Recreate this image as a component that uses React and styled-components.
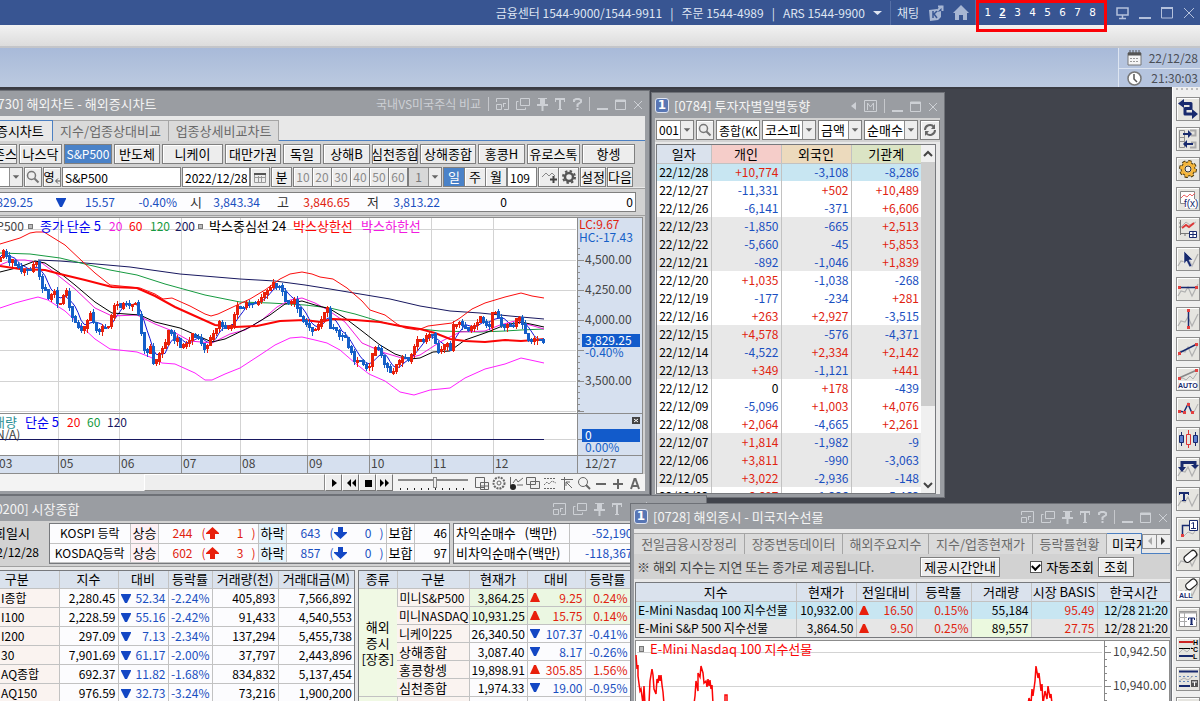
import React, { useState } from "react";
import styled, { createGlobalStyle, css } from "styled-components";

const RED = "#e0230f";
const BLUE = "#1a4fc0";
const NAVY = "#182a6e";

const GlobalStyle = createGlobalStyle`
  *, *::before, *::after { box-sizing: border-box; }
  body { margin: 0; overflow: hidden; }
  body, button, input, select, table {
    font-family: "Noto Sans CJK KR", sans-serif;
    font-size: 13px;
    line-height: 16px;
    color: #000;
  }
  svg { display: block; flex: none; }
  svg text { font-size: 13px; }
  svg text.num { font-size: 12px; }
`;

/* ---------- shell ---------- */

const Page = styled.div`
  display: flex;
  flex-direction: column;
  height: 100vh;
  overflow: hidden;
`;

const TopBar = styled.header`
  display: flex;
  justify-content: flex-end;
  align-items: center;
  height: 25px;
  flex: none;
  background: #385592;
  color: #dfe5f2;
  white-space: nowrap;
`;

const TopPhones = styled.button`
  display: flex;
  align-items: center;
  gap: 8px;
  margin-right: 8px;
  padding: 0;
  border: 0;
  background: none;
  color: inherit;
  font-size: 12px;
`;

const TopGroup = styled.div`
  display: flex;
  align-items: center;
  height: 24px;
  gap: ${p => p.$gap}px;
  padding: 0 ${p => p.$pad}px;
  border-left: 1px solid ${p => (p.$plain ? "transparent" : "#5670a6")};
`;

const GhostButton = styled.button`
  display: flex;
  padding: 0;
  border: 0;
  background: none;
  color: ${p => p.$color || "#cdd0d5"};
  font-size: ${p => p.$size || 13}px;
  white-space: nowrap;
`;

const Screens = styled.nav`
  position: relative;
  display: flex;
  align-items: center;
  height: 25px;
  width: 135px;
  padding-left: 4px;
  border-left: 1px solid #5670a6;

  &::after {
    content: "";
    position: absolute;
    top: 0;
    left: 0;
    width: 131px;
    height: 32px;
    border: 3px solid #fb0207;
    pointer-events: none;
    z-index: 5;
  }
`;

const ScreenLink = styled.a`
  width: 15px;
  text-align: center;
  font-family: "DejaVu Sans Mono", monospace;
  font-size: 11px;
  line-height: 14px;
  color: #fff;
  font-weight: ${p => (p.$active ? "bold" : "normal")};
  text-decoration: ${p => (p.$active ? "underline" : "none")};
`;

const MenuStrip = styled.div`
  flex: none;
  height: 23px;
  background: linear-gradient(#f2f2f2, #dcdcdc);
  border-bottom: 2px solid #c3c5c9;
`;

const InfoStrip = styled.div`
  display: flex;
  justify-content: flex-end;
  flex: none;
  height: 39px;
  background: linear-gradient(#a8bad9, #bccae0);
`;

const Clock = styled.dl`
  width: 82px;
  margin: 0;
  border-left: 1px solid #dde5f1;
  background: #b5c4de;
  color: #4b4f57;

  div {
    display: flex;
    align-items: center;
    height: 20px;
    padding: 0 2px 0 8px;
  }
  div + div { border-top: 1px solid #dde5f1; height: 19px; }
  dd { margin: 0 0 0 auto; font-size: 12px; }
`;

const Work = styled.div`
  display: flex;
  flex: 1;
  min-height: 0;
`;

const Desktop = styled.main`
  position: relative;
  flex: 1;
  overflow: hidden;
  background: #41444c;
  border-top: 2px solid #3a3c42;
`;

const ToolStrip = styled.aside`
  flex: none;
  width: 28px;
  padding: 10px 0 0 3px;
  overflow: hidden;
  background: #f0f0f0;
  border-left: 1px solid #fff;
  background-image: linear-gradient(90deg, #bdbdbd 2px, transparent 2px);
  background-size: 5px 2px;
  background-position: 3px 1px;
  background-repeat: repeat-x;
`;

const ToolButton = styled.button`
  display: flex;
  width: 24px;
  height: 24px;
  margin-bottom: 6px;
  padding: 0;
  border: 1px solid #8f8f8f;
  background: #e6e5e0;
  box-shadow: inset 1px 1px 0 #fff;

  text {
    font-family: "Liberation Sans", sans-serif;
    font-weight: bold;
    font-size: 7px;
  }
  text.fx { font-size: 10px; font-weight: normal; }
`;

/* ---------- windows ---------- */

const WindowFrame = styled.section`
  position: absolute;
  left: ${p => p.$x}px;
  top: ${p => p.$y}px;
  width: ${p => p.$w}px;
  display: flex;
  flex-direction: column;
  padding: 0 ${p => p.$right || 4}px 3px 3px;
  border: 1px solid #6e7177;
  background: #9a9da2;
  z-index: ${p => p.$z || 1};
`;

const TitleBar = styled.div`
  display: flex;
  align-items: center;
  flex: none;
  height: 25px;
  gap: 5px;
  color: #f4f4f4;
  white-space: nowrap;

  h2 { margin: 0; font-size: 13px; font-weight: normal; flex: 1; }
`;

const Badge = styled.span`
  width: 14px;
  height: 15px;
  border: 1px solid #dfe4f0;
  border-radius: 3px;
  background: #5876b4;
  color: #fff;
  font: bold 12px/13px "DejaVu Sans", sans-serif;
  text-align: center;
`;

const TitleIcons = styled.div`
  display: flex;
  align-items: center;
  gap: 7px;
  margin-right: 2px;
  color: #cdd0d5;
`;

const Divider = styled.i`
  width: 1px;
  height: 14px;
  background: #c6c8cc;
`;

const Body = styled.div`
  background: #e8e8e8;
  overflow: hidden;
`;

const Tabs = styled.div`
  display: flex;
  height: 25px;
  padding-top: 4px;
  border-bottom: 1px solid #4c80c2;
`;

const Tab = styled.button`
  height: 21px;
  width: ${p => p.$w}px;
  padding: 0;
  flex: none;
  overflow: hidden;
  white-space: nowrap;
  border: 1px solid #a5a5a5;
  border-left-width: 0;
  border-bottom: 0;
  background: #dadada;
  color: #6a6a6a;
  ${p => p.$active && css`
    padding-left: 5px;
    border-color: #4c80c2;
    background: #e8e8e8;
    color: #000;
    text-align: left;
  `}
`;

const Bar = styled.div`
  display: flex;
  align-items: center;
  gap: ${p => p.$gap || 2}px;
  padding: ${p => p.$pad || "3px 2px 0"};
  background: #d2d2d2;
  white-space: nowrap;
`;

const PushButton = styled.button`
  display: flex;
  align-items: center;
  justify-content: center;
  width: ${p => p.$w}px;
  height: 20px;
  flex: none;
  padding: 0;
  overflow: hidden;
  white-space: nowrap;
  border: 1px solid #7f7f7f;
  background: ${p => (p.$active ? "#4a82c8" : "#ededed")};
  box-shadow: inset 1px 1px 0 ${p => (p.$active ? "#4a82c8" : "#fff")};
  color: ${p => (p.$active ? "#fff" : p.disabled ? "#8a8a8a" : "#000")};
  font-size: ${p => (p.$num ? 12 : 13)}px;
`;

const Joined = styled.div`
  display: flex;
  button + button { margin-left: -1px; }
`;

const Field = styled.input`
  width: ${p => p.$w}px;
  height: 20px;
  flex: none;
  min-width: 0;
  padding: 0 2px;
  border: 1px solid #7f7f7f;
  background: #fff;
  font-size: 12px;
`;

const ComboBox = styled.div`
  position: relative;
  width: ${p => p.$w}px;
  height: 20px;
  flex: none;
  border: 1px solid #7f7f7f;
  background: ${p => p.$bg || "#fff"};

  select {
    width: 100%;
    height: 18px;
    padding: 0 ${p => (p.$end ? 19 : 0)}px 0 2px;
    border: 0;
    background: none;
    appearance: none;
    color: ${p => (p.$end ? "#777" : "inherit")};
    font-size: ${p => (p.$num ? 12 : 13)}px;
    text-align: ${p => (p.$end ? "right" : "left")};
  }
  svg {
    position: absolute;
    top: 0;
    right: 0;
    width: 13px;
    height: 18px;
    border-left: 1px solid #8f8f8f;
    background: #ededed;
    pointer-events: none;
  }
`;

const Combo = ({ label, value, w, bg, num, end }) => (
  <ComboBox $w={w} $bg={bg} $num={num} $end={end}>
    <select aria-label={label} defaultValue={value}>
      <option>{value}</option>
    </select>
    <svg viewBox="0 0 13 18"><path d="M3 7h7l-3.500 4z" fill="#666" /></svg>
  </ComboBox>
);

/* ---------- tables ---------- */

const Grid = styled.table`
  width: 100%;
  table-layout: fixed;
  border-collapse: collapse;

  th {
    height: 18px;
    padding: 0;
    font-weight: normal;
    background: #dae2ed;
  }
  td {
    height: ${p => p.$row || 18}px;
    padding: 0 2px;
    text-align: right;
  }
  th, td {
    overflow: hidden;
    white-space: nowrap;
    line-height: 16px;
    border: 1px solid #c2c2c2;
    border-width: ${p => (p.$lines ? "0 0 1px 1px" : "0 0 0 1px")};
  }
  th { border-bottom-width: 1px; }
  th:first-child, td:first-child { border-left: 0; }
`;

const Cell = styled.td`
  && { text-align: ${p => p.$align || "right"}; }
  color: ${p => p.$color || "#000"};
  background: ${p => p.$bg || "transparent"};
  font-size: ${p => (p.$text ? 13 : 12)}px;
`;

const Boxed = styled.div`
  width: ${p => p.$w}px;
  flex: none;
  overflow: hidden;
  border: 1px solid #77797d;
  background: #fcfcfe;
`;

const Split = styled.span`
  display: flex;
  justify-content: space-between;
  align-items: center;
`;

const signColor = v => (v.startsWith("-") ? BLUE : v.startsWith("+") ? RED : "#000");

const Tri = ({ up }) => (
  <svg width="11" height="11" viewBox="0 0 11 11">
    <path d={up ? "M0 10l4-9h2l4 9z" : "M0 1h10v1l-4 8H4L0 2z"} fill={up ? "#e8200c" : "#1347c4"} />
  </svg>
);

const Arrow = ({ up }) => (
  <svg width="13" height="12" viewBox="0 0 13 12">
    <path d={up ? "M6.500 0L13 6v1H9v5H4V7H0V6z" : "M6.500 12L13 6V5H9V0H4v5H0v1z"} fill={up ? "#e8200c" : "#1347c4"} />
  </svg>
);

/* ---------- icons ---------- */

const Icon = ({ w = 14, h = 14, label, children }) => (
  <svg width={w} height={h} viewBox={`0 0 ${w} ${h}`} fill="none" stroke="currentColor" role={label ? "img" : undefined} aria-label={label}>
    {children}
  </svg>
);

const Search = () => (
  <Icon><circle cx="5.500" cy="5.500" r="4" stroke="#777" strokeWidth="1.500" /><path d="M8.500 8.500l4 4" stroke="#777" strokeWidth="2" /></Icon>
);

const WinButtons = () => (
  <>
    <GhostButton aria-label="최소화"><Icon w={11}><path d="M0 12h11" strokeWidth="2" /></Icon></GhostButton>
    <GhostButton aria-label="최대화"><Icon w={11}><path d="M.5 3v9.500h10V3z" /><path d="M0 4h11" strokeWidth="2" /></Icon></GhostButton>
    <GhostButton aria-label="닫기"><Icon w={10}><path d="M1 4l8 8M9 4l-8 8" /></Icon></GhostButton>
  </>
);

const ViewButtons = () => (
  <>
    <GhostButton aria-label="크기"><Icon w={13}><path d="M.5 5V1.500h12v11H8M.5 7.500h5v5h-5zM7 6.500h3M7.500 6v4" /></Icon></GhostButton>
    <GhostButton aria-label="복사"><Icon w={14}><path d="M4.500 1.500h9v7h-9zM2.500 4.500h-2v8h9v-2" /></Icon></GhostButton>
    <GhostButton aria-label="고정"><Icon w={11}><path d="M1 1h9v1H8v5h3v2H0V7h3V2H1z" fill="currentColor" stroke="none" /><path d="M5.500 9v5" strokeWidth="2" /></Icon></GhostButton>
    <GhostButton aria-label="글꼴"><Icon w={11}><path d="M.5 5V1.500h9V5M3 12.500h4" /><path d="M0 2h10M5 2v10" strokeWidth="2" /></Icon></GhostButton>
    <GhostButton aria-label="도움말"><Icon w={9}><path d="M1 5V3l2-1h3l2 1v2L4.500 7.500V10M4.500 11v2" strokeWidth="2" /></Icon></GhostButton>
  </>
);

const wave = <path d="M1 18l3-5 4 1 3-5 4 9 6-12" stroke="#b0b0b0" strokeWidth="1.200" />;
const dot = (x, y) => <rect x={x - 1} y={y - 1} width="3" height="3" fill="#e34040" stroke="none" />;

const toolIcons = [
  ["전환", <><path d="M4 5.500h10v5H8v5.500h9" stroke={NAVY} strokeWidth="3" strokeLinejoin="round" /><path d="M7 1v9L1 5.500zM15 11v10l6-5z" fill={NAVY} stroke="none" /></>],
  ["이동", <><path d="M2.500 2.500h5v17h-5zM2 9.500h6M2 13.500h6" stroke="#8f8f8f" /><path d="M13 2.500h5.500v5H14M13 19.500h5.500v-5H14" stroke="#aaa" strokeWidth="2" /><path d="M6 6h6M16 16H9" stroke={NAVY} strokeWidth="2" /><path d="M11 2l4 4-4 4zM10 12l-4 4 4 4z" fill={NAVY} stroke="none" /></>],
  ["설정", <><circle cx="11" cy="11" r="7" stroke="#4e3c12" strokeWidth="4" strokeDasharray="3 2.500" /><circle cx="11" cy="11" r="6" stroke="#4e3c12" strokeWidth="3" /><circle cx="11" cy="11" r="7" stroke="#f5b63c" strokeWidth="2" strokeDasharray="3 2.500" /><circle cx="11" cy="11" r="5" stroke="#f5b63c" strokeWidth="3" /><circle cx="11" cy="11" r="3" stroke="#333" fill="#eee" /></>],
  ["수식", <><path d="M3.500 3.500h14v12h-14z" fill="#fff" stroke="#888" /><path d="M4 10l3-3 3 2 3-3 2 2 3-3" stroke="#e66" /><path d="M8 11h13v9H8z" fill="#fff" stroke="none" /><text className="fx" x="7" y="19" fill={NAVY} stroke="none">f(x)</text></>],
  ["지표", <><path d="M3.500 2v15M3 15.500h9M2 5h2M2 9h2M8 15v3" stroke="#777" /><path d="M4 9l5-5 4 3 6-3" stroke="#b0b0b0" /><path d="M5 10l4-3 3 2 5-4" stroke="#dd3838" strokeWidth="2" /><path d="M12.500 13.500h7v6h-7zM16 14v6M12 16.500h8" fill="#fff" stroke={NAVY} /></>],
  ["선택", <>{wave}<path d="M7 3l9 9h-4l3 6-2.500 1-3-6-2.500 3z" fill={NAVY} stroke="#fff" strokeWidth=".5" /></>],
  ["수평선", <>{wave}<path d="M2 9.500h18" stroke={NAVY} strokeWidth="1.500" />{dot(2, 9)}{dot(19, 9)}</>],
  ["수직선", <>{wave}<path d="M11.500 3v16" stroke={NAVY} strokeWidth="1.500" />{dot(11, 2)}{dot(11, 19)}</>],
  ["추세선", <>{wave}<path d="M2 15l18-9" stroke={NAVY} strokeWidth="1.500" />{dot(2, 15)}{dot(19, 6)}</>],
  ["자동추세", <><path d="M2 11l4-1 3 2 4-4 3 3 4-6" stroke="#b0b0b0" /><path d="M2 10l18-8" stroke="#888" strokeWidth="1.500" />{dot(2, 10)}{dot(19, 2)}<path d="M2 13h18v8H2z" fill="#fff" stroke="none" /><text x="1" y="20" fill={NAVY} stroke="none">AUTO</text></>],
  ["패턴", <><path d="M14 15l3-1 4-8" stroke="#b0b0b0" /><path d="M2 13l5 1 4-8 4 9" stroke={NAVY} strokeWidth="1.500" />{dot(2, 13)}{dot(7, 14)}{dot(11, 6)}{dot(15, 14)}</>],
  ["봉", <><path d="M4.500 4v14M18.500 4v14" stroke={NAVY} /><path d="M2.500 7.500h4v7h-4zM16.500 7.500h4v7h-4z" fill="#5d7fd0" stroke={NAVY} /><path d="M11.500 2v4M11.500 17v3M9.500 6.500h4v10h-4z" stroke="#d33" /></>],
  ["되돌리기", <>{wave}<path d="M5 12V4.500h13V8" stroke={NAVY} strokeWidth="3" /><path d="M1 9h8l-4 5zM14 7h8l-4 4z" fill={NAVY} stroke="none" /></>],
  ["문자", <>{wave}<path d="M2.500 7V4.500h9V7M5 12.500h4" stroke={NAVY} /><path d="M2 5h10M7 5v8" stroke={NAVY} strokeWidth="2" /></>],
  ["번호", <><path d="M7 18l4-4 5 2 4-6" stroke="#b0b0b0" /><path d="M5.500 17V7.500H12" stroke={NAVY} strokeWidth="1.500" />{dot(5, 17)}<path d="M12.500 2.500h8v10h-8z" fill="#fff" stroke={NAVY} /><path d="M14.500 5.500l2-1v6M14 10.500h5" stroke={NAVY} /></>],
  ["지우기", <>{wave}<rect x="6" y="5" width="14" height="7" rx="3" transform="rotate(-40 13 8)" fill="#fff" stroke="#222" strokeWidth="1.200" /></>],
  ["전체지우기", <>{wave}<rect x="8" y="3" width="12" height="7" rx="3" transform="rotate(-40 14 6)" fill="#fff" stroke="#222" strokeWidth="1.200" /><path d="M1 13h13v8H1z" fill="#fff" stroke="none" /><text x="2" y="20" fill={NAVY} stroke="none">ALL</text></>],
  ["표", <><path d="M2.500 3.500h17v15h-17z" fill="#fff" stroke="#888" /><path d="M2 4.500h18" stroke="#aaa" strokeWidth="2" /><path d="M2 9.500h18M2 13.500h18M7.500 4v14" stroke="#aaa" /><path d="M10 9h9v8h-9z" fill="#fff" stroke="none" /><path d="M11.500 12v-2h6v2M13 16.500h3" stroke={NAVY} /><path d="M14.500 10v7" stroke={NAVY} strokeWidth="2" /></>],
  ["고저종", <><path d="M2 4h14" stroke="#c22" strokeWidth="2" /><path d="M2 18h14" stroke={NAVY} strokeWidth="2" /><path d="M2 10.500h14" stroke="#000" /><path d="M2 15l4-4 4 3 5-5" stroke="#b0b0b0" /><text x="16" y="7" fill="#000" stroke="none">H</text><text x="16" y="14" fill="#000" stroke="none">C</text><text x="16" y="21" fill="#000" stroke="none">L</text></>],
  ["구간", <><path d="M2 3.500h19M2 18h11" stroke={NAVY} strokeWidth="2" /><path d="M2 8.500h18M2 13.500h11" stroke="#68b" strokeDasharray="2 2" /><path d="M2 13l5-3 4 2 5-4" stroke="#b0b0b0" /><path d="M14 12h7v7h-7z" fill="#555" stroke="none" /><path d="M15 14h5M17.500 14v4" stroke="#fff" /></>],
  ["더보기", <path d="M3 4h16" stroke="#999" />]
];

/* ---------- price chart ---------- */

const closes = [
  [0, 257], [3, 251], [6, 255], [9, 262], [12, 260], [18, 267], [22, 272], [25, 267], [29, 273], [32, 265], [36, 262],
  [38, 270], [41, 287], [44, 286], [47, 298], [50, 299], [53, 285], [56, 303], [59, 304], [62, 300], [65, 285], [68, 303],
  [73, 320], [79, 327], [82, 331], [88, 318], [91, 310], [94, 328], [100, 332], [103, 324], [106, 329], [109, 324],
  [112, 312], [115, 302], [121, 308], [124, 300], [127, 306], [135, 303], [139, 317], [141, 332], [144, 350], [147, 352],
  [150, 346], [153, 363], [156, 360], [160, 351], [165, 343], [168, 330], [171, 333], [174, 340], [177, 338], [180, 347],
  [186, 343], [189, 340], [192, 334], [198, 338], [201, 343], [204, 348], [207, 345], [210, 338], [216, 328], [219, 322],
  [225, 328], [231, 325], [234, 314], [237, 306], [243, 307], [246, 303], [257, 303], [260, 298], [267, 290], [273, 283],
  [277, 287], [280, 286], [283, 293], [286, 303], [292, 302], [295, 297], [298, 313], [304, 321], [307, 325], [313, 331],
  [319, 324], [323, 313], [327, 308], [329, 326], [335, 329], [338, 333], [341, 338], [344, 333], [347, 345], [350, 348],
  [353, 361], [359, 360], [365, 366], [368, 370], [371, 358], [374, 346], [380, 351], [383, 362], [389, 370], [392, 377],
  [395, 359], [397, 369], [400, 357], [406, 358], [409, 361], [412, 350], [418, 338], [424, 341], [427, 334], [433, 334],
  [436, 348], [439, 352], [442, 347], [448, 342], [450, 350], [453, 325], [459, 322], [465, 327], [468, 330], [477, 322],
  [480, 317], [486, 325], [489, 326], [492, 312], [494, 310], [497, 315], [500, 322], [503, 328], [509, 324], [512, 328],
  [518, 315], [521, 320], [524, 331], [527, 338], [530, 342], [536, 338], [539, 340], [544, 342]
];

const at = (pts, x) => {
  const i = Math.max(1, pts.findIndex(p => p[0] >= x));
  const [x0, y0] = pts[i - 1];
  const [x1, y1] = pts[i];
  return y0 + ((y1 - y0) * (x - x0)) / (x1 - x0);
};

const candles = [];
for (let i = 0; i < 182; i++) {
  const x = i * 3;
  const close = at(closes, x);
  const open = i ? at(closes, x - 3) : close + 4;
  const pad = (i * 7) % 3;
  candles.push({
    x,
    close,
    up: close < open,
    top: Math.round(Math.min(open, close) - (pad === 1 ? 1 : 0)),
    bottom: Math.round(Math.max(open, close) + (pad === 2 ? 2 : 1)),
    wick: (i * 5) % 4,
    tail: (i * 11) % 5
  });
}

const ma5 = candles.map((c, i) => {
  const part = candles.slice(Math.max(0, i - 4), i + 1);
  return `${c.x},${part.reduce((s, p) => s + p.close, 0) / part.length}`;
}).join(" ");

const lines = [
  ["#181860", 1, "38,260 60,261 85,263 130,267 180,274 240,279 275,281 305,285 330,289 360,294 390,299 420,306 450,311 480,313 510,316 544,319"],
  ["#169a40", 1, "0,253 30,254 60,258 85,264 110,270 137,275 165,284 205,295 240,302 270,303 305,305 330,308 355,314 385,323 410,328 440,331 480,332 505,331 521,330 544,329"],
  ["#fb0d0d", 1, "0,244 10,241 20,238 30,233 36,232 44,232 52,237 65,245 83,262 95,273 110,285 140,288 155,294 163,299 172,298 190,306 205,314 211,316 218,314 235,306 250,299 265,290 280,279 290,274 302,272 312,274 320,277 333,279 347,288 362,301 370,310 385,315 397,324 405,328 418,330 428,326 452,323 460,318 472,309 485,303 505,297 521,293 532,296 544,298"],
  ["#ff20ff", 1, "0,308 15,303 30,299 38,297 48,300 65,311 80,325 95,339 110,349 137,352 150,357 162,363 175,364 195,373 205,380 212,380 225,374 240,368 260,355 275,345 290,338 302,337 315,340 327,343 340,350 355,363 369,374 385,381 400,392 414,395 430,390 450,388 465,378 485,369 505,364 521,358 535,361 544,363"],
  ["#f21ae0", 1, "0,265 12,260 25,260 42,263 55,273 75,289 95,308 112,316 137,315 155,324 170,330 190,341 212,343 230,334 245,330 262,320 277,307 290,300 302,298 315,303 328,310 345,322 362,343 385,353 405,359 420,355 440,342 460,332 485,331 500,325 515,321 530,325 544,329"],
  ["#000", 1, "0,272 20,267 35,261 45,263 60,273 75,285 95,302 112,313 140,315 155,322 180,328 205,339 212,342 225,339 250,327 270,315 285,304 302,301 315,305 330,309 345,318 362,331 380,345 395,354 410,359 420,358 433,352 450,351 465,340 485,333 505,325 521,322 535,325 544,327"],
  ["#fb0505", 2, "0,266 20,269 45,270 60,274 85,280 112,287 137,288 155,296 175,307 195,316 215,325 235,327 257,326 280,321 305,320 320,322 333,319 355,320 380,322 400,326 420,329 435,333 450,339 465,341 485,342 505,340 521,341 535,340 544,339"]
];

const legend = [
  [-19, "S&P500", "#444"], [40, "종가 단순 5", "#0000f0"], [109, "20", "#f21ae0"], [129, "60", "#fb0505"],
  [150, "120", "#169a40"], [175, "200", "#181860"], [209, "박스중심선 24", "#000"], [293, "박스상한선", "#fb0505"], [361, "박스하한선", "#f21ae0"]
];

const months = [[-3, "03"], [58, "05"], [119, "06"], [181, "07"], [240, "08"], [307, "09"], [369, "10"], [431, "11"], [493, "12"]];

const PriceChart = () => (
  <svg width="674" height="257" viewBox="-31 217 674 257" role="img" aria-label="S&P500 일봉 차트">
    <rect x="-31" y="217" width="674" height="257" fill="#fff" />
    <rect x="578" y="218" width="64" height="256" fill="#d6e0ef" />
    <rect x="-31" y="456" width="673" height="17" fill="#d6e0ef" />
    <g stroke="#d3d3d3" shapeRendering="crispEdges">
      {[229, 260, 290, 320, 350, 381, 411, 439].map(y => <path key={y} d={`M-31 ${y}.500H576`} />)}
      {months.slice(1).map(([x]) => <path key={x} d={`M${x}.500 218V456`} />)}
    </g>
    <g stroke="#8c8c8c" shapeRendering="crispEdges">
      <path d="M-31 217.500H643M-31 413.500H643M-31 455.500H643M-31 473.500H643M577.500 217V474M642.500 217V474" />
      {months.slice(1).map(([x]) => <path key={x} d={`M${x}.500 456V473`} />)}
      {Array.from({ length: 28 }, (_, i) => <path key={i} d={`M578 ${248 + i * 6}.500h2`} />)}
      {[260, 290, 320, 350, 381, 411, 439].map(y => <path key={y} d={`M578 ${y}.500h6`} />)}
    </g>
    {lines.slice(0, 4).map(([c, w, pts]) => <polyline key={c} points={pts} fill="none" stroke={c} strokeWidth={w} />)}
    <polyline points={ma5} fill="none" stroke="#1414d8" />
    {lines.slice(4).map(([c, w, pts]) => <polyline key={c} points={pts} fill="none" stroke={c} strokeWidth={w} />)}
    <g shapeRendering="crispEdges">
      {candles.map(c => (
        <g key={c.x} fill={c.up ? "#e8200c" : "#155fc8"}>
          <rect x={c.x} y={c.top - c.wick} width="1" height={c.bottom - c.top + c.wick + c.tail} />
          <rect x={c.x - 1} y={c.top} width="3" height={Math.max(2, c.bottom - c.top)} />
        </g>
      ))}
    </g>
    <path d="M-31 439.500H544" stroke="#181860" shapeRendering="crispEdges" />
    {legend.map(([x, t, c]) => <text key={t} className={/[가-힣]/.test(t) ? "" : "num"} x={x} y="231" fill={c}>{t}</text>)}
    {[28, 198].map(x => <rect key={x} x={x + 0.5} y="224.500" width="4" height="4" fill="#bbb" stroke="#777" />)}
    <text x="-19" y="427" fill="#2a8f96">거래량</text>
    <text x="25" y="427" fill="#0000f0">단순 5</text>
    <text className="num" x="67" y="427" fill="#fb0505">20</text>
    <text className="num" x="87" y="427" fill="#169a40">60</text>
    <text className="num" x="107" y="427" fill="#181860">120</text>
    <text className="num" x="-8" y="439" fill="#444">(N/A)</text>
    {months.map(([x, m]) => <text className="num" key={m} x={x + 2} y="468" fill="#444">{m}</text>)}
    <text className="num" x="585" y="468" fill="#444">12/27</text>
    <g fill="#444">
      <text className="num" x="585" y="264">4,500.00</text>
      <text className="num" x="585" y="294">4,250.00</text>
      <text className="num" x="585" y="324">4,000.00</text>
      <text className="num" x="585" y="385">3,500.00</text>
    </g>
    <text className="num" x="579" y="229" fill={RED}>LC:9.67</text>
    <text className="num" x="579" y="242" fill="#155fc8">HC:-17.43</text>
    <rect x="582" y="334" width="58" height="13" fill="#125bcb" />
    <text className="num" x="585" y="345" fill="#fff">3,829.25</text>
    <text className="num" x="585" y="357" fill="#155fc8">-0.40%</text>
    <rect x="582" y="429" width="58" height="13" fill="#125bcb" />
    <text className="num" x="585" y="440" fill="#fff">0</text>
    <text className="num" x="585" y="452" fill="#155fc8">0.00%</text>
    <rect x="632" y="417" width="8" height="7" fill="#444" />
    <path d="M634 419l4 3M638 419l-4 3" stroke="#fff" />
  </svg>
);

const Quote = styled.dl`
  display: grid;
  grid-template-columns: 63px 34px 48px 62px 25px 58px 29px 61px 29px 61px 67px 1fr;
  align-items: center;
  height: 20px;
  margin: 0 9px 0 2px;
  padding-right: 2px;
  border: 1px solid #7f7f7f;
  background: #fdfdff;
  color: ${BLUE};

  dt { color: #333; text-align: right; }
  dd { margin: 0; text-align: right; font-size: 12px; }
  svg { margin-left: auto; }
`;

const QuoteValue = styled.dd`
  color: ${p => p.$color};
`;

const QuoteWrap = styled.div`
  padding: 3px 0;
  border-top: 1px solid #a0a0a0;
  border-bottom: 1px solid #a0a0a0;
  margin-top: 1px;
  background: #d2d2d2;
`;

const PlayRow = styled.div`
  display: flex;
  align-items: center;
  height: 17px;
  padding-right: 3px;
  background: #f3f3f3;
`;

const Thumb = styled.div`
  width: 181px;
  height: 17px;
  margin-left: 177px;
  border: 1px solid #8a8a8a;
  border-top-color: #fff;
  border-left-color: #fff;
  background: #eee;
`;

const PlayButton = styled.button`
  width: 17px;
  height: 17px;
  padding: 0;
  display: flex;
  align-items: center;
  justify-content: center;
  border: 1px solid #777;
  border-top-color: #fff;
  border-left-color: #fff;
  background: #eee;
`;

const Zoom = styled.input`
  appearance: none;
  width: 70px;
  height: 14px;
  margin: 0 7px 0 5px;
  background:
    linear-gradient(#8a8a8a, #8a8a8a) 0 3px / 100% 2px no-repeat,
    repeating-linear-gradient(90deg, #222 0 1px, transparent 1px 7px) 2px 12px / 100% 3px no-repeat;

  &::-webkit-slider-thumb {
    appearance: none;
    width: 4px;
    height: 11px;
    border: 1px solid #888;
    background: #eee;
  }
`;

const ChartIcons = styled.div`
  display: flex;
  align-items: center;
  gap: 3px;
  margin-left: auto;
  color: #666;
`;

const chartTools = [
  ["창 추가", <path d="M.5 1.500h9v10h-9zM5.500 6.500h8v7h-8zM9.500 6v8M5 10h9" />],
  ["환경", <><circle cx="7" cy="7" r="5.500" strokeWidth="2" strokeDasharray="2 1" /><circle cx="7" cy="7" r="2" /></>],
  ["지표 추가", <><path d="M1.500 1v9M4 7l3-4 2 3 5-4M8 9h6" /><circle cx="4" cy="11" r="3" fill="#222" stroke="none" /></>],
  ["겹치기", <path d="M.5 1.500h9v7h-9zM4.500 5.500h9v7h-9z" fill="#eee" />],
  ["비교", <path d="M1 2.500h12M1 12.500h12M1 9l3-3 2 2 3-3 4 2" strokeDasharray="2 1" />],
  ["십자선", <path d="M4.500 1v13M1 3.500h12M6 6l6 6M6 6v4M6 6h4" />],
  ["돋보기", <><circle cx="6" cy="6" r="4.500" /><path d="M9 9l4 4" strokeWidth="2" /></>],
  ["축소", <path d="M2 8h10" strokeWidth="2" />],
  ["확대", <path d="M2 8h10M7 3v10" strokeWidth="2" />],
  ["자동", <path d="M3 13L6.500 3h1L11 13M4 10h6" strokeWidth="2" />]
];

const markets = [
  ["다우존스", 48], ["나스닥", 43], ["S&P500", 48], ["반도체", 46], ["니케이", 61], ["대만가권", 56], ["독일", 38],
  ["상해B", 47], ["심천종합", 46], ["상해종합", 56], ["홍콩H", 47], ["유로스톡", 53], ["항셍", 53]
];

const ChartWindow = () => {
  const [market, setMarket] = useState("S&P500");
  return (
    <WindowFrame $x={-37} $y={1} $w={687}>
      <TitleBar>
        <Badge>1</Badge>
        <h2>[0730] 해외차트 - 해외증시차트</h2>
        <TitleIcons>
          <GhostButton $size={12}>국내VS미국주식 비교</GhostButton>
          <Divider />
          <ViewButtons />
          <Divider />
          <WinButtons />
        </TitleIcons>
      </TitleBar>
      <Body>
        <Tabs>
          <Tab $w={86} $active>해외증시차트</Tab>
          <Tab $w={116}>지수/업종상대비교</Tab>
          <Tab $w={110}>업종상세비교차트</Tab>
        </Tabs>
        <Bar>
          {markets.map(([name, w]) => (
            <PushButton key={name} $w={w} $num={name === "S&P500"} $active={name === market} onClick={() => setMarket(name)}>{name}</PushButton>
          ))}
        </Bar>
        <Bar $gap={1}>
          <Combo label="종목코드" value="SPX" w={54} num />
          <PushButton $w={18} aria-label="검색"><Search /></PushButton>
          <PushButton $w={18} $num>
            영<Icon w={6} h={16}><path d="M5.500 6v6H1M3 9.500L.5 12 3 14.500" stroke="#555" /></Icon>
          </PushButton>
          <Field aria-label="종목명" defaultValue="S&P500" $w={119} />
          <Joined>
            <Field aria-label="일자" defaultValue="2022/12/28" $w={68} />
            <PushButton $w={20} aria-label="달력">
              <Icon w={12} h={12}><path d="M.5 2.500h11v9H.5zM1 6.500h10M4.500 5v6M7.500 5v6" stroke="#999" /><path d="M0 3h12" stroke="#555" strokeWidth="2" /></Icon>
            </PushButton>
          </Joined>
          <PushButton $w={21}>분</PushButton>
          <Joined>
            {["10", "20", "30", "40", "50", "60"].map(n => <PushButton key={n} $w={20} $num disabled>{n}</PushButton>)}
            <Combo label="분 단위" value="1" w={34} bg="#d8d8d8" num end />
          </Joined>
          <Joined>
            <PushButton $w={22} $active>일</PushButton>
            <PushButton $w={22}>주</PushButton>
            <PushButton $w={22}>월</PushButton>
            <Field aria-label="개수" defaultValue="109" $w={30} />
          </Joined>
          <Joined>
            <PushButton $w={21} aria-label="지표"><Icon w={16}><path d="M1 7l4-4 3 3 3-3 3 3" stroke="#888" /><path d="M12.500 6v7M9 9.500h7" stroke="#444" strokeWidth="2" /></Icon></PushButton>
            <PushButton $w={21} aria-label="차트 설정"><Icon><circle cx="7" cy="7" r="4" stroke="#555" strokeWidth="2.500" /><circle cx="7" cy="7" r="6" stroke="#555" strokeWidth="2" strokeDasharray="2.400 2.300" /></Icon></PushButton>
          </Joined>
          <PushButton $w={26}>설정</PushButton>
          <PushButton $w={26}>다음</PushButton>
        </Bar>
        <QuoteWrap>
          <Quote>
            <dd>3,829.25</dd>
            <dd><Tri /></dd>
            <dd>15.57</dd>
            <dd>-0.40%</dd>
            <dt>시</dt>
            <dd>3,843.34</dd>
            <dt>고</dt>
            <QuoteValue $color={RED}>3,846.65</QuoteValue>
            <dt>저</dt>
            <dd>3,813.22</dd>
            <QuoteValue $color="#000">0</QuoteValue>
            <QuoteValue $color="#000">0</QuoteValue>
          </Quote>
        </QuoteWrap>
        <Bar $pad="1px 2px 0">
          <PriceChart />
        </Bar>
        <PlayRow>
          <Thumb />
          <PlayButton aria-label="재생"><Icon w={10} h={10}><path d="M3 1v8l5-4z" fill="#000" stroke="none" /></Icon></PlayButton>
          <PlayButton aria-label="뒤로"><Icon w={10} h={10}><path d="M5 1v8L1 5zM10 1v8L6 5z" fill="#000" stroke="none" /></Icon></PlayButton>
          <PlayButton aria-label="정지"><Icon w={10} h={10}><path d="M2 2h7v7H2z" fill="#000" stroke="none" /></Icon></PlayButton>
          <PlayButton aria-label="앞으로"><Icon w={10} h={10}><path d="M0 1v8l4-4zM5 1v8l4-4z" fill="#000" stroke="none" /></Icon></PlayButton>
          <Zoom type="range" aria-label="확대 비율" defaultValue="53" />
          <ChartIcons>
            {chartTools.map(([name, art]) => (
              <GhostButton key={name} aria-label={name} $color="#666"><Icon>{art}</Icon></GhostButton>
            ))}
          </ChartIcons>
        </PlayRow>
      </Body>
    </WindowFrame>
  );
};

/* ---------- investor window ---------- */

const investorRows = [
  ["22/12/28", "+10,774", "-3,108", "-8,286"],
  ["22/12/27", "-11,331", "+502", "+10,489"],
  ["22/12/26", "-6,141", "-371", "+6,606"],
  ["22/12/23", "-1,850", "-665", "+2,513"],
  ["22/12/22", "-5,660", "-45", "+5,853"],
  ["22/12/21", "-892", "-1,046", "+1,839"],
  ["22/12/20", "+1,035", "-1,038", "-268"],
  ["22/12/19", "-177", "-234", "+281"],
  ["22/12/16", "+263", "+2,927", "-3,515"],
  ["22/12/15", "+4,578", "-576", "-4,371"],
  ["22/12/14", "-4,522", "+2,334", "+2,142"],
  ["22/12/13", "+349", "-1,121", "+441"],
  ["22/12/12", "0", "+178", "-439"],
  ["22/12/09", "-5,096", "+1,003", "+4,076"],
  ["22/12/08", "+2,064", "-4,665", "+2,261"],
  ["22/12/07", "+1,814", "-1,982", "-9"],
  ["22/12/06", "+3,811", "-990", "-3,063"],
  ["22/12/05", "+3,022", "-2,936", "-148"],
  ["22/12/02", "+6,697", "-1,336", "-5,463"]
];

const investorBg = i => (i === 0 ? "#c8e6f2" : Math.floor(i / 3) % 2 ? "#e8e8e8" : "#fff");

const TableScroll = styled.div`
  display: flex;
  height: 350px;
  margin: 2px 4px 0 1px;
  border: 1px solid #77797d;
  overflow: hidden;
  background: #fff;
  table { width: 264px; flex: none; }
`;

const ScrollTrack = styled.div`
  display: flex;
  flex: 1;
  flex-direction: column;
  align-items: center;
  justify-content: space-between;
  background: linear-gradient(#f0f0f0 17px, #cdcdcd 17px 261px, #f0f0f0 261px);
`;

const Tint = styled.th`
  && { background: ${p => p.$bg}; }
`;

const cols = widths => <colgroup>{widths.map((w, i) => <col key={i} style={w ? { width: w } : undefined} />)}</colgroup>;

const InvestorWindow = () => (
  <WindowFrame $x={651} $y={3} $w={294}>
    <TitleBar>
      <Badge>1</Badge>
      <h2>[0784] 투자자별일별동향</h2>
      <TitleIcons>
        <GhostButton aria-label="이전"><Icon w={6}><path d="M5 3v8L0 7z" fill="currentColor" stroke="none" /></Icon></GhostButton>
        <GhostButton aria-label="메모"><Icon w={13}><path d="M.5 1.500h12v11H.5zM3.500 11V4l3 4 3-4v7" /></Icon></GhostButton>
        <Divider />
        <WinButtons />
      </TitleIcons>
    </TitleBar>
    <Body>
      <Bar $pad="2px 1px">
        <Combo label="시장" value="001" w={38} num />
        <PushButton $w={18} aria-label="검색"><Search /></PushButton>
        <Field aria-label="업종" defaultValue="종합(KOSPI)" $w={44} />
        <Combo label="지수" value="코스피" w={54} />
        <Combo label="단위" value="금액" w={44} />
        <Combo label="구분" value="순매수" w={54} />
        <PushButton $w={20} aria-label="새로고침">
          <Icon><path d="M2 7a5 5 0 0 1 9-3M12 7a5 5 0 0 1-9 3" stroke="#666" strokeWidth="2" /><path d="M12 1v5H8zM2 13V8h4z" fill="#666" stroke="none" /></Icon>
        </PushButton>
      </Bar>
      <TableScroll>
        <Grid>
          {cols([54, 70, 70, 70])}
          <thead>
            <tr><th>일자</th><Tint $bg="#f5cdc9">개인</Tint><Tint $bg="#ecdabd">외국인</Tint><Tint $bg="#dbe4c4">기관계</Tint></tr>
          </thead>
          <tbody>
            {investorRows.map((r, i) => (
              <tr key={r[0]}>
                {r.map((v, j) => <Cell key={j} $bg={investorBg(i)} $color={j ? signColor(v) : "#000"}>{v}</Cell>)}
              </tr>
            ))}
          </tbody>
        </Grid>
        <ScrollTrack>
          <Icon w={10} h={17}><path d="M1 11l4-4 4 4" stroke="#444" strokeWidth="2" /></Icon>
          <Icon w={10} h={17}><path d="M1 7l4 4 4-4" stroke="#444" strokeWidth="2" /></Icon>
        </ScrollTrack>
      </TableScroll>
    </Body>
  </WindowFrame>
);

/* ---------- market summary window ---------- */

const Columns = styled.div`
  display: flex;
  align-items: flex-start;
  gap: 3px;
  padding: ${p => p.$pad};
  background: ${p => p.$bg || "transparent"};
  border-bottom: ${p => (p.$line ? "1px solid #a0a0a0" : "0")};
`;

const Stamp = styled.div`
  width: 74px;
  flex: none;
  padding: 0 7px 0 1px;
  line-height: 19px;
  text-align: center;
  div + div { font-size: 12px; text-align: right; }
`;

const Moves = styled.span`
  display: grid;
  grid-template-columns: 32px 13px 13px 25px 1fr;
  align-items: center;
  color: ${p => p.$color};
`;

const breadth = [
  ["KOSPI 등락", "244", "1", "643", "0", "46"],
  ["KOSDAQ등락", "602", "3", "857", "0", "97"]
];

const indexRows = [
  ["I종합", "2,280.45", "52.34", "-2.24%", "405,893", "7,566,892"],
  ["I100", "2,228.59", "55.16", "-2.42%", "91,433", "4,540,553"],
  ["I200", "297.09", "7.13", "-2.34%", "137,294", "5,455,738"],
  ["30", "7,901.69", "61.17", "-2.00%", "37,797", "2,443,896"],
  ["AQ종합", "692.37", "11.82", "-1.68%", "834,832", "5,137,454"],
  ["AQ150", "976.59", "32.73", "-3.24%", "73,216", "1,900,200"]
];

const worldRows = [
  ["미니S&P500", "3,864.25", true, "9.25", "0.24%"],
  ["미니NASDAQ", "10,931.25", true, "15.75", "0.14%"],
  ["니케이225", "26,340.50", false, "107.37", "-0.41%"],
  ["상해종합", "3,087.40", false, "8.17", "-0.26%"],
  ["홍콩항셍", "19,898.91", true, "305.85", "1.56%"],
  ["심천종합", "1,974.33", false, "19.00", "-0.95%"],
  ["", "", null, "", ""]
];

const Move = ({ n, m, up }) => (
  <Moves $color={up ? RED : BLUE}>
    <span>{n}</span><span>(</span><Arrow up={up} /><span>{m}</span><span>)</span>
  </Moves>
);

const IndexName = styled.span`
  display: block;
  padding-left: 24px;
`;

const SummaryWindow = () => (
  <WindowFrame $x={-32} $y={406} $w={739}>
    <TitleBar>
      <Badge>1</Badge>
      <h2>[0200] 시장종합</h2>
      <TitleIcons>
        <ViewButtons />
        <Divider />
        <WinButtons />
      </TitleIcons>
    </TitleBar>
    <Body>
      <Columns $pad="2px 0 2px" $bg="#d2d2d2" $line>
        <Stamp><div>조회일시</div><div>22/12/28</div></Stamp>
        <Boxed $w={401}>
          <Grid $row={19} $lines>
            {cols([80, 28, 100, 28, 100, 28, 0])}
            <tbody>
              {breadth.map(b => (
                <tr key={b[0]}>
                  <Cell $align="center">{b[0]}</Cell>
                  <Cell $text $align="center" $bg="#fdf1f5">상승</Cell>
                  <Cell><Move up n={b[1]} m={b[2]} /></Cell>
                  <Cell $text $align="center" $bg="#e4f3fb">하락</Cell>
                  <Cell><Move n={b[3]} m={b[4]} /></Cell>
                  <Cell $text $align="center">보합</Cell>
                  <Cell>{b[5]}</Cell>
                </tr>
              ))}
            </tbody>
          </Grid>
        </Boxed>
        <Boxed $w={240}>
          <Grid $row={19} $lines>
            {cols([115, 66, 0])}
            <tbody>
              <tr><Cell $text $align="left">차익순매수&nbsp;&nbsp;&nbsp;(백만)</Cell><Cell $color={BLUE}>-52,190</Cell><td /></tr>
              <tr><Cell $text $align="left">비차익순매수(백만)</Cell><Cell $color={BLUE}>-118,367</Cell><td /></tr>
            </tbody>
          </Grid>
        </Boxed>
      </Columns>
      <Columns $pad="3px 0 0 2px">
        <Boxed $w={381}>
          <Grid $row={19} $lines>
            {cols([84, 59, 50, 44, 66, 0])}
            <thead>
              <tr><th>구분</th><th>지수</th><th>대비</th><th>등락률</th><th>거래량(천)</th><th>거래대금(M)</th></tr>
            </thead>
            <tbody>
              {indexRows.map(r => (
                <tr key={r[0]}>
                  <Cell $align="left" $bg="#faf3f0"><IndexName>{r[0]}</IndexName></Cell>
                  <Cell>{r[1]}</Cell>
                  <Cell $color={BLUE}><Split><Tri />{r[2]}</Split></Cell>
                  <Cell $color={BLUE}>{r[3]}</Cell>
                  <Cell>{r[4]}</Cell>
                  <Cell>{r[5]}</Cell>
                </tr>
              ))}
            </tbody>
          </Grid>
        </Boxed>
        <Boxed $w={330}>
          <Grid $row={18} $lines>
            {cols([38, 72, 58, 58, 45, 0])}
            <thead>
              <tr><th>종류</th><th>구분</th><th>현재가</th><th>대비</th><th>등락률</th><th /></tr>
            </thead>
            <tbody>
              {worldRows.map((r, i) => {
                const fresh = i < 2 ? "#ebf7e2" : "transparent";
                const color = r[2] ? RED : BLUE;
                return (
                  <tr key={r[0]}>
                    {i === 0 && <Cell $text rowSpan={6} $align="center" $bg="#f0f9e4">해외<br />증시<br />[장중]</Cell>}
                    {i === 6 && <Cell $bg="#f0f9e4" />}
                    <Cell $text={i > 2} $align="left" $bg="#faf3f0">{r[0]}</Cell>
                    <Cell $bg={fresh}>{r[1]}</Cell>
                    <Cell $color={color} $bg={fresh}>{r[3] && <Split><Tri up={r[2]} />{r[3]}</Split>}</Cell>
                    <Cell $color={color} $bg={fresh}>{r[4]}</Cell>
                    <td />
                  </tr>
                );
              })}
            </tbody>
          </Grid>
        </Boxed>
      </Columns>
    </Body>
  </WindowFrame>
);

/* ---------- futures window ---------- */

const Note = styled.span`
  flex: 1;
  color: #444;
`;

const Check = styled.label`
  display: flex;
  align-items: center;
  gap: 4px;
  margin-left: 26px;

  input {
    appearance: none;
    width: 12px;
    height: 12px;
    margin: 0;
    border: 1px solid #555;
    background: #fff;
    position: relative;
  }
  input:checked::after {
    content: "";
    position: absolute;
    left: 1px;
    top: 1px;
    width: 8px;
    height: 6px;
    border: solid #000;
    border-width: 0 0 2px 2px;
    transform: rotate(-45deg);
  }
`;

const TabPager = styled.div`
  display: flex;
  flex: none;
  margin: 1px 1px 0 auto;
  button { width: 15px; height: 15px; justify-content: center; align-items: center; border: 1px solid #8f8f8f; background: #eee; }
  button + button { margin-left: -1px; }
`;

const futures = [
  ["E-Mini Nasdaq 100 지수선물", "10,932.00", "16.50", "0.15%", "55,184", "95.49", "12/28 21:20"],
  ["E-Mini S&P 500 지수선물", "3,864.50", "9.50", "0.25%", "89,557", "27.75", "12/28 21:20"]
];

const FuturesChart = () => (
  <svg width="535" height="66" viewBox="635 639 535 66" role="img" aria-label="E-Mini Nasdaq 100">
    <rect x="635.500" y="639.500" width="534" height="80" fill="#fff" stroke="#8c8c8c" />
    <path d="M637 651.500h465M637 685.500h465" stroke="#d3d3d3" shapeRendering="crispEdges" />
    <path d="M1104.500 640v70M1105 651.500h6M1105 685.500h6M1105 645.500h2M1105 658.500h2M1105 665.500h2M1105 672.500h2M1105 679.500h2M1105 692.500h2M1105 699.500h2" stroke="#888" shapeRendering="crispEdges" />
    <g fill="none" stroke="#fb0505" strokeWidth="1.500">
      <polyline points="636,654 637,668 638,664 638,675 640,690 641,688 643,703 644,685 645,703" />
      <polyline points="649,703 650,680 652,668 653,674 654,688 656,693 657,678 658,682 659,674 660,680 661,674 662,684 663,691 664,703" />
      <polyline points="694,703 695,695 696,680 698,690 698,672 700,676 701,665 703,672 704,682 706,680 707,686 708,678 709,685 710,679 711,688 712,684 713,703" />
      <polyline points="725,703 725,694 727,694 727,703" />
      <polyline points="1028,703 1029,697 1031,703 1032,688 1033,695 1035,680 1036,665 1038,677 1039,672 1041,690 1042,683 1043,703 1045,690 1047,698 1048,685 1050,697 1051,693 1052,703" />
    </g>
    <rect x="639.500" y="645.500" width="4" height="5" fill="#bbb" stroke="#777" />
    <text x="650" y="653" fill="#fb0505">E-Mini Nasdaq 100 지수선물</text>
    <text className="num" x="1113" y="655" fill="#444">10,942.50</text>
    <text className="num" x="1113" y="689" fill="#444">10,940.00</text>
  </svg>
);

const FuturesWindow = () => (
  <WindowFrame $x={630} $y={414} $w={542} $z={2} $right={1}>
    <TitleBar>
      <Badge>1</Badge>
      <h2>[0728] 해외증시 - 미국지수선물</h2>
      <TitleIcons>
        <ViewButtons />
        <Divider />
        <WinButtons />
      </TitleIcons>
    </TitleBar>
    <Body>
      <Tabs>
        <Tab $w={111}>전일금융시장정리</Tab>
        <Tab $w={98}>장중변동데이터</Tab>
        <Tab $w={86}>해외주요지수</Tab>
        <Tab $w={104}>지수/업종현재가</Tab>
        <Tab $w={74}>등락률현황</Tab>
        <Tab $w={35} $active>미국지수선물</Tab>
        <TabPager>
          <GhostButton aria-label="이전 탭"><Icon w={5} h={9}><path d="M5 0v8L1 4z" fill="#aaa" stroke="none" /></Icon></GhostButton>
          <GhostButton aria-label="다음 탭"><Icon w={5} h={9}><path d="M0 0v8l4-4z" fill="#333" stroke="none" /></Icon></GhostButton>
        </TabPager>
      </Tabs>
      <Bar $gap={4} $pad="3px 36px 2px 3px">
        <Note>※ 해외 지수는 지연 또는 종가로 제공됩니다.</Note>
        <PushButton $w={80}>제공시간안내</PushButton>
        <Check><input type="checkbox" defaultChecked />자동조회</Check>
        <PushButton $w={36}>조회</PushButton>
      </Bar>
      <Columns $pad="3px 0 2px 1px">
        <Boxed $w={536}>
          <Grid>
            {cols([160, 60, 60, 55, 60, 66, 0])}
            <thead>
              <tr><th>지수</th><th>현재가</th><th>전일대비</th><th>등락률</th><th>거래량</th><th>시장 BASIS</th><th>한국시간</th></tr>
            </thead>
            <tbody>
              {futures.map((r, i) => {
                const bg = i ? "#e6e6e6" : "#c8e6f2";
                return (
                  <tr key={r[0]}>
                    <Cell $align="left" $bg={bg}>{r[0]}</Cell>
                    <Cell $bg={bg}>{r[1]}</Cell>
                    <Cell $bg={bg} $color={RED}><Split><Tri up />{r[2]}</Split></Cell>
                    <Cell $bg={bg} $color={RED}>{r[3]}</Cell>
                    <Cell $bg={i ? "#ebf9df" : bg}>{r[4]}</Cell>
                    <Cell $bg={bg} $color={RED}>{r[5]}</Cell>
                    <Cell $bg={bg}>{r[6]}</Cell>
                  </tr>
                );
              })}
            </tbody>
          </Grid>
        </Boxed>
      </Columns>
      <Columns $pad="0 0 0 1px">
        <FuturesChart />
      </Columns>
    </Body>
  </WindowFrame>
);

const App = () => {
  const [screen, setScreen] = useState(2);
  return (
    <Page>
      <GlobalStyle />
      <TopBar>
        <TopPhones>
          <span>금융센터 1544-9000/1544-9911</span><span>|</span><span>주문 1544-4989</span><span>|</span><span>ARS 1544-9900</span>
          <Icon w={9} h={6}><path d="M0 1h9L4.500 5z" fill="currentColor" stroke="none" /></Icon>
        </TopPhones>
        <TopGroup $gap={9} $pad={6}>
          <GhostButton $color="#dfe5f2" $size={12}>채팅</GhostButton>
          <GhostButton $color="#a7b6d3" aria-label="Ki">
            <Icon w={16} h={16}><path d="M1 5l8-1v3l4-1v6l-3 3-8 1z" fill="currentColor" stroke="none" /><path d="M5 13V6M5 10l4-4M6 9l3 4" stroke="#385592" strokeWidth="1.500" /><path d="M9 6l5-5M10 1.500h4.500V6" strokeWidth="2" /></Icon>
          </GhostButton>
          <GhostButton $color="#a7b6d3" aria-label="홈">
            <Icon w={16} h={15}><path d="M8 0l8 8h-2v7h-4v-5H6v5H2V8H0z" fill="currentColor" stroke="none" /></Icon>
          </GhostButton>
        </TopGroup>
        <Screens aria-label="화면">
          {[1, 2, 3, 4, 5, 6, 7, 8].map(n => (
            <ScreenLink key={n} href={`#${n}`} $active={n === screen} onClick={() => setScreen(n)}>{n}</ScreenLink>
          ))}
        </Screens>
        <TopGroup $gap={10} $pad={5} $plain>
          <GhostButton $color="#b4c1dc" aria-label="모니터"><Icon w={13}><path d="M1 2h11v7H1zM6.500 9v3M3 12.500h7" strokeWidth="1.500" /></Icon></GhostButton>
          <GhostButton $color="#b4c1dc" aria-label="최소화"><Icon w={12}><path d="M0 12h12" strokeWidth="2" /></Icon></GhostButton>
          <GhostButton $color="#b4c1dc" aria-label="최대화"><Icon w={12}><path d="M.5 2v10h11V2z" /><path d="M0 2h12" strokeWidth="2" /></Icon></GhostButton>
          <GhostButton $color="#b4c1dc" aria-label="닫기"><Icon w={12}><path d="M1 2l10 10M11 2L1 12" /></Icon></GhostButton>
        </TopGroup>
      </TopBar>
      <MenuStrip />
      <InfoStrip>
        <Clock>
          <div>
            <Icon w={15} h={16}><path d="M1 3h13v12H1z" fill="#f5f5f5" stroke="#777" /><path d="M1 4h13" stroke="#555" strokeWidth="3" /><path d="M3 0v3M6 0v3M9 0v3M12 0v3" stroke="#555" /><path d="M3 8.500h9M3 11.500h9" stroke="#999" strokeDasharray="2 1" /></Icon>
            <dd>22/12/28</dd>
          </div>
          <div>
            <Icon w={15} h={15}><circle cx="7.500" cy="7.500" r="6.500" fill="#fff" stroke="#777" strokeWidth="1.500" /><path d="M7 3v5l3 3" stroke="#555" strokeWidth="1.500" /></Icon>
            <dd>21:30:03</dd>
          </div>
        </Clock>
      </InfoStrip>
      <Work>
        <Desktop>
          <ChartWindow />
          <InvestorWindow />
          <SummaryWindow />
          <FuturesWindow />
        </Desktop>
        <ToolStrip>
          {toolIcons.map(([name, art]) => (
            <ToolButton key={name} aria-label={name}><Icon w={22} h={22}>{art}</Icon></ToolButton>
          ))}
        </ToolStrip>
      </Work>
    </Page>
  );
};

export default App;
